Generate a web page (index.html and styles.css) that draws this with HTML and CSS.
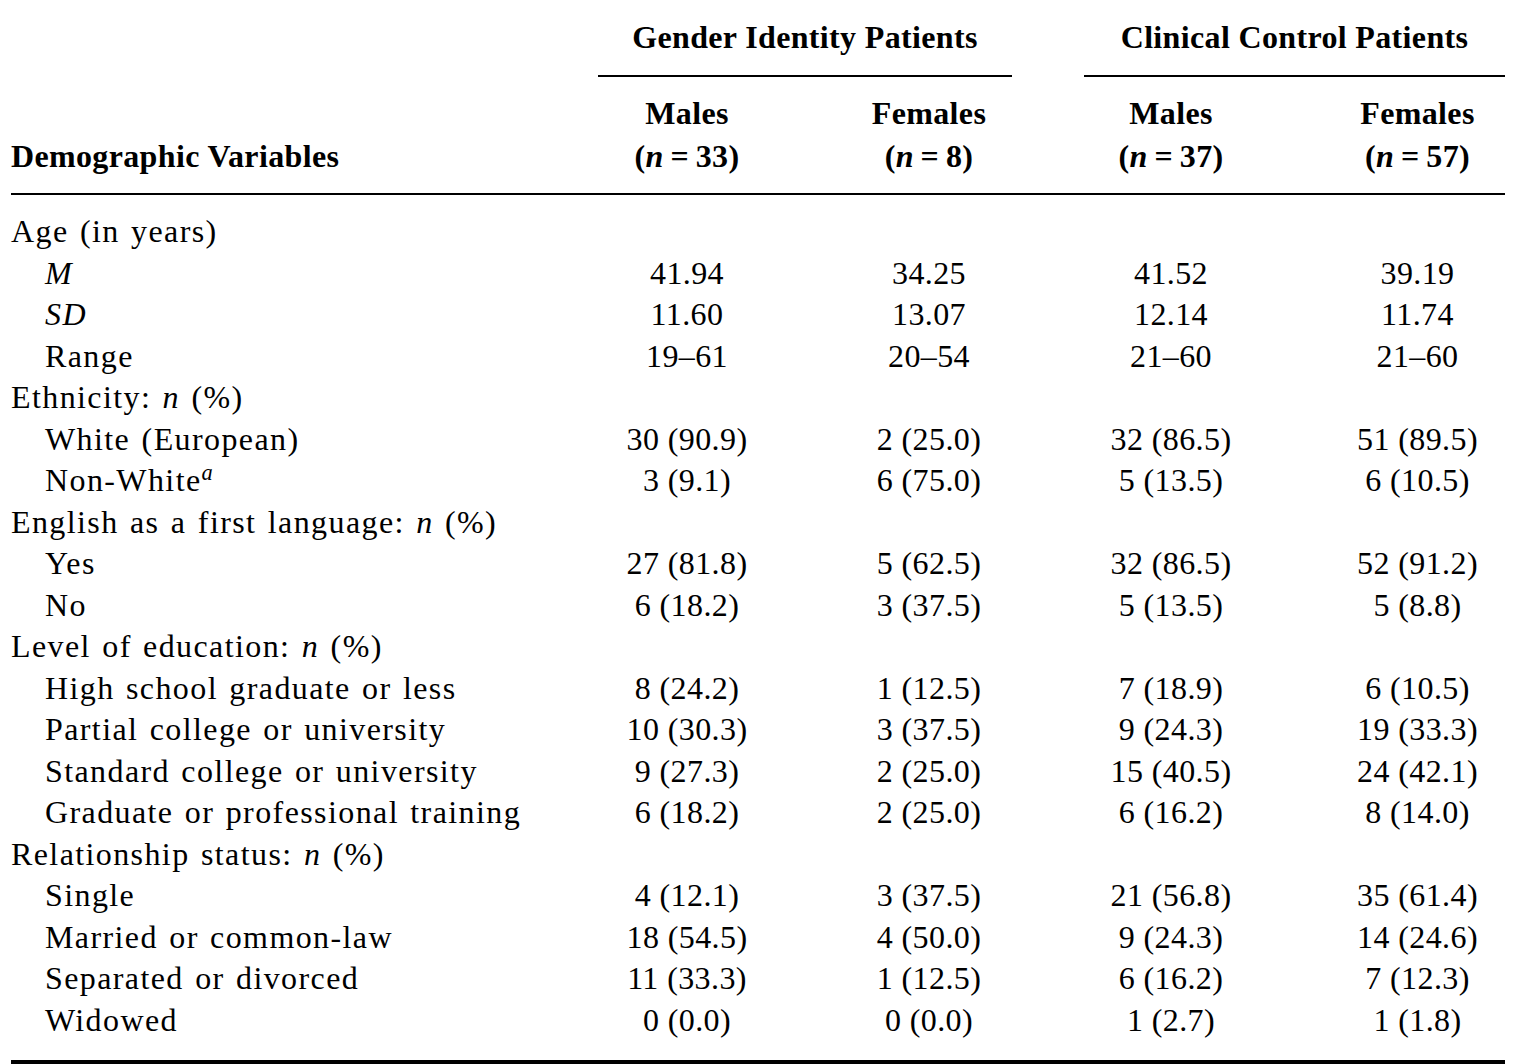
FILE: index.html
```html
<!DOCTYPE html>
<html lang="en">
<head>
<meta charset="utf-8">
<title>Demographic Variables</title>
<link rel="stylesheet" href="styles.css">
</head>
<body>
<div class="page">
<table class="demo">
  <colgroup>
    <col class="c-label">
    <col class="c-num">
    <col class="c-num">
    <col class="c-num">
    <col class="c-last">
  </colgroup>
  <thead>
    <tr class="spanrow">
      <th class="label-head" rowspan="2">Demographic Variables</th>
      <th colspan="2"><div class="spanner sp-left">Gender Identity Patients</div></th>
      <th colspan="2"><div class="spanner sp-right">Clinical Control Patients</div></th>
    </tr>
    <tr class="grouprow">
      <th>Males<br>(<i>n</i>&#8201;=&#8201;33)</th>
      <th>Females<br>(<i>n</i>&#8201;=&#8201;8)</th>
      <th>Males<br>(<i>n</i>&#8201;=&#8201;37)</th>
      <th class="last">Females<br>(<i>n</i>&#8201;=&#8201;57)</th>
    </tr>
  </thead>
  <tbody>
    <tr class="first"><td>Age (in years)</td><td></td><td></td><td></td><td class="last"></td></tr>
    <tr><td class="sub"><i>M</i></td><td>41.94</td><td>34.25</td><td>41.52</td><td class="last">39.19</td></tr>
    <tr><td class="sub"><i>SD</i></td><td>11.60</td><td>13.07</td><td>12.14</td><td class="last">11.74</td></tr>
    <tr><td class="sub">Range</td><td>19–61</td><td>20–54</td><td>21–60</td><td class="last">21–60</td></tr>
    <tr><td>Ethnicity: <i>n</i> (%)</td><td></td><td></td><td></td><td class="last"></td></tr>
    <tr><td class="sub">White (European)</td><td>30 (90.9)</td><td>2 (25.0)</td><td>32 (86.5)</td><td class="last">51 (89.5)</td></tr>
    <tr><td class="sub">Non-White<sup><i>a</i></sup></td><td>3 (9.1)</td><td>6 (75.0)</td><td>5 (13.5)</td><td class="last">6 (10.5)</td></tr>
    <tr><td>English as a first language: <i>n</i> (%)</td><td></td><td></td><td></td><td class="last"></td></tr>
    <tr><td class="sub">Yes</td><td>27 (81.8)</td><td>5 (62.5)</td><td>32 (86.5)</td><td class="last">52 (91.2)</td></tr>
    <tr><td class="sub">No</td><td>6 (18.2)</td><td>3 (37.5)</td><td>5 (13.5)</td><td class="last">5 (8.8)</td></tr>
    <tr><td>Level of education: <i>n</i> (%)</td><td></td><td></td><td></td><td class="last"></td></tr>
    <tr><td class="sub">High school graduate or less</td><td>8 (24.2)</td><td>1 (12.5)</td><td>7 (18.9)</td><td class="last">6 (10.5)</td></tr>
    <tr><td class="sub">Partial college or university</td><td>10 (30.3)</td><td>3 (37.5)</td><td>9 (24.3)</td><td class="last">19 (33.3)</td></tr>
    <tr><td class="sub">Standard college or university</td><td>9 (27.3)</td><td>2 (25.0)</td><td>15 (40.5)</td><td class="last">24 (42.1)</td></tr>
    <tr><td class="sub">Graduate or professional training</td><td>6 (18.2)</td><td>2 (25.0)</td><td>6 (16.2)</td><td class="last">8 (14.0)</td></tr>
    <tr><td>Relationship status: <i>n</i> (%)</td><td></td><td></td><td></td><td class="last"></td></tr>
    <tr><td class="sub">Single</td><td>4 (12.1)</td><td>3 (37.5)</td><td>21 (56.8)</td><td class="last">35 (61.4)</td></tr>
    <tr><td class="sub">Married or common-law</td><td>18 (54.5)</td><td>4 (50.0)</td><td>9 (24.3)</td><td class="last">14 (24.6)</td></tr>
    <tr><td class="sub">Separated or divorced</td><td>11 (33.3)</td><td>1 (12.5)</td><td>6 (16.2)</td><td class="last">7 (12.3)</td></tr>
    <tr class="final"><td class="sub">Widowed</td><td>0 (0.0)</td><td>0 (0.0)</td><td>1 (2.7)</td><td class="last">1 (1.8)</td></tr>
  </tbody>
</table>
</div>
</body>
</html>
```

FILE: styles.css
```css
html, body {
  margin: 0;
  padding: 0;
  background: #ffffff;
}

.page {
  padding: 17px 13px 0 11px;
  font-family: "Liberation Serif", "Times New Roman", serif;
  color: #000;
}

.demo {
  width: 1494px;
  border-collapse: collapse;
  table-layout: fixed;
  font-size: 32px;
}

.c-label { width: 555px; }
.c-num { width: 242px; }
.c-last { width: 213px; }

.demo th,
.demo td {
  padding: 0;
  font-weight: normal;
}

.demo thead th {
  font-weight: bold;
  font-size: 32px;
  letter-spacing: 0.35px;
  text-align: center;
  vertical-align: top;
}

.demo thead th.label-head {
  text-align: left;
  vertical-align: bottom;
  line-height: 43px;
  padding-bottom: 15px;
  border-bottom: 2px solid #000;
}

.spanrow th {
  line-height: 40px;
}

.spanner {
  padding-bottom: 18px;
  border-bottom: 2px solid #000;
}

.sp-left {
  margin-left: 32px;
  margin-right: 38px;
}

.sp-right {
  margin-left: 34px;
  margin-right: 0;
}

.grouprow th {
  line-height: 43px;
  padding-top: 15px;
  padding-bottom: 15px;
  border-bottom: 2px solid #000;
}

.demo thead th.last,
.demo td.last {
  padding-left: 38px;
}

.demo tbody td {
  line-height: 41.5px;
  text-align: center;
  white-space: nowrap;
  letter-spacing: 0.4px;
}

.demo tbody td:first-child {
  text-align: left;
  letter-spacing: 1.4px;
  word-spacing: 2px;
}

.demo tbody td.sub {
  padding-left: 34px;
}

.demo tbody tr.first td {
  padding-top: 16px;
}

.demo tbody tr.final td {
  padding-bottom: 19px;
  border-bottom: 6px solid #000;
}

sup {
  font-size: 0.7em;
  line-height: 0;
  vertical-align: 0.5em;
}
```
